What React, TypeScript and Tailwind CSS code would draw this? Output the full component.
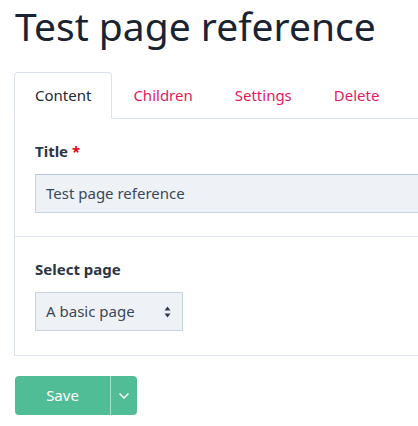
export default function App() {
  const tabs = ["Content", "Children", "Settings", "Delete"];

  return (
    <div className="min-h-screen w-full overflow-hidden bg-white font-['Noto_Sans',sans-serif] text-[#1c2634]">
      <div className="w-[640px] pl-[14px]">
        <h1 className="pl-[1px] pt-[1px] text-[39px] leading-[50px] font-normal text-[#1a2332]">
          Test page reference
        </h1>

        {/* Tabs */}
        <ul className="mt-[21px] flex border-b border-[#dce3eb]">
          {tabs.map((t, i) => (
            <li
              key={t}
              className={
                i === 0
                  ? "-mb-px rounded-t-[4px] border border-b-white border-[#dce3eb] bg-white px-5 py-[11px] text-[15px] leading-[22px] text-[#1f2937]"
                  : "border border-transparent px-5 py-[11px] text-[15px] leading-[22px] text-[#e5195e]"
              }
            >
              {t}
            </li>
          ))}
        </ul>

        {/* Panel */}
        <div className="border-x border-b border-[#dce3eb]">
          <div className="border-b border-[#dce3eb] px-5 pt-[21px] pb-[23px]">
            <label className="mb-3 block text-[15px] leading-[22px] font-bold text-[#2c3645]">
              Title <span className="text-[#e3001b]">*</span>
            </label>
            <div className="flex h-[39px] items-center border border-[#c8d4e2] border-t-[#b4c5d8] bg-[#eef2f7] px-[10px] text-[15px] text-[#3b4858]">
              Test page reference
            </div>
          </div>
          <div className="px-5 pt-[21px] pb-6">
            <label className="mb-3 block text-[15px] leading-[22px] font-bold text-[#2c3645]">
              Select page
            </label>
            <div className="flex h-[39px] w-[148px] items-center justify-between border border-[#c8d4e2] bg-[#eef2f7] pr-[11px] pl-[10px] text-[15px] text-[#3b4858]">
              <span>A basic page</span>
              <svg width="7" height="12" viewBox="0 0 7 12" className="text-[#2f3b4b]">
                <path d="M3.5 0.5 L6.5 4.5 H0.5 Z" fill="currentColor" />
                <path d="M3.5 11.5 L6.5 7.5 H0.5 Z" fill="currentColor" />
              </svg>
            </div>
          </div>
        </div>

        {/* Save */}
        <div className="mt-[20px] ml-px flex h-[39px] w-[122px] overflow-hidden rounded-[4px] bg-[#50bd96] text-white">
          <div className="flex w-[95px] items-center justify-center text-[15px]">Save</div>
          <div className="w-px bg-[#a9dfcb]" />
          <div className="flex flex-1 items-center justify-center">
            <svg width="10" height="6" viewBox="0 0 10 6" fill="none">
              <path d="M1 1 L5 5 L9 1" stroke="white" strokeWidth="1.6" strokeLinecap="round" strokeLinejoin="round" />
            </svg>
          </div>
        </div>
      </div>
    </div>
  );
}
